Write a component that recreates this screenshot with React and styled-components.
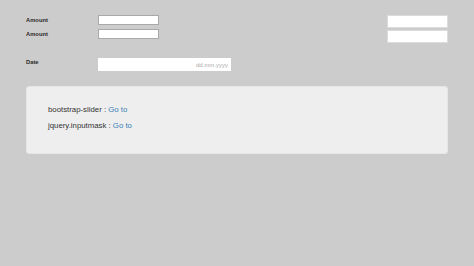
import React from 'react';
import styled, { createGlobalStyle } from 'styled-components';

const GlobalStyle = createGlobalStyle`
  html, body {
    margin: 0;
    padding: 0;
    background: #cccccc;
    font-family: "Liberation Sans", Arial, sans-serif;
    color: #333;
  }
`;

const Page = styled.div`
  padding: 15px 26px 0;
`;

const Header = styled.div`
  display: flex;
  justify-content: space-between;
  align-items: flex-start;
`;

const FormColumn = styled.div`
  display: flex;
  flex-direction: column;
`;

const FieldRow = styled.div`
  display: grid;
  grid-template-columns: 72px auto;
  align-items: ${(p) => (p.$top ? 'start' : 'center')};
  margin-top: ${(p) => p.$gap || 0}px;
`;

const Label = styled.label`
  font-size: 5.8px;
  font-weight: bold;
  line-height: 7px;
  color: #2a2a2a;
  padding-top: ${(p) => p.$nudge || 0}px;
`;

const TextInput = styled.input`
  width: 61px;
  height: 9.5px;
  box-sizing: border-box;
  margin: 0;
  padding: 0;
  border: 1px solid #a9a9a9;
  background: #fff;
`;

const DateInput = styled.input`
  width: 133px;
  height: 13px;
  box-sizing: border-box;
  margin: 0;
  padding: 0 3px 0 0;
  border: none;
  background: #fff;
  text-align: right;
  font-family: "Liberation Sans", Arial, sans-serif;
  font-size: 6px;

  &::placeholder {
    color: #aaa;
  }
`;

const SideColumn = styled.div`
  display: flex;
  flex-direction: column;
  gap: 2.5px;
`;

const SideInput = styled.input`
  width: 61px;
  height: 12.5px;
  box-sizing: border-box;
  margin: 0;
  padding: 0;
  border: 1px solid #dcdcdc;
  background: #fff;
`;

const Well = styled.div`
  margin-top: 15px;
  height: 68px;
  box-sizing: border-box;
  padding: 15px 21px;
  background: #eeeeee;
  border: 1px solid #e6e6e6;
  border-radius: 3px;
`;

const Item = styled.div`
  font-size: 7.8px;
  line-height: 16px;
  color: #333;
`;

const Link = styled.a`
  color: #3a7fb8;
  text-decoration: none;
`;

const links = [
  { name: 'bootstrap-slider', href: '#' },
  { name: 'jquery.inputmask', href: '#' },
];

const App = () => (
  <>
    <GlobalStyle />
    <Page>
      <Header>
        <FormColumn>
          <FieldRow>
            <Label $nudge={2}>Amount</Label>
            <TextInput type="text" />
          </FieldRow>
          <FieldRow $gap={4.5}>
            <Label $nudge={2}>Amount</Label>
            <TextInput type="text" />
          </FieldRow>
          <FieldRow $gap={19.5} $top>
            <Label $nudge={0.5}>Date</Label>
            <DateInput type="text" placeholder="dd.mm.yyyy" />
          </FieldRow>
        </FormColumn>
        <SideColumn>
          <SideInput type="text" />
          <SideInput type="text" />
        </SideColumn>
      </Header>
      <Well>
        {links.map((l) => (
          <Item key={l.name}>
            {l.name} : <Link href={l.href}>Go to</Link>
          </Item>
        ))}
      </Well>
    </Page>
  </>
);

export default App;
